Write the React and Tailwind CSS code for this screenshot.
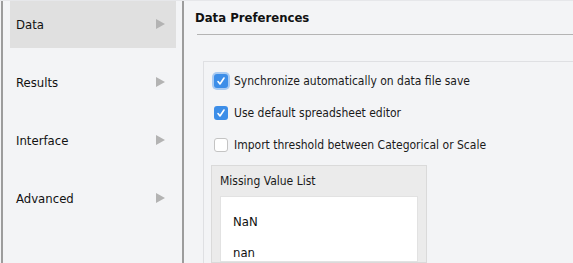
import React from "react";

const font = { fontFamily: '"DejaVu Sans Condensed", "DejaVu Sans", sans-serif' };

function Arrow() {
  return (
    <svg width="9" height="10" viewBox="0 0 9 10" className="shrink-0">
      <polygon points="0,0 9,5 0,10" fill="#b3b3b3" />
    </svg>
  );
}

function NavItem({ label, active }) {
  return (
    <div
      className={`h-[48px] flex items-center justify-between pl-[6px] pr-[11px] ${
        active ? "bg-[#e0e0e0]" : ""
      }`}
    >
      <span className="text-[13px] text-[#111] mt-[2px]">{label}</span>
      <Arrow />
    </div>
  );
}

function Check({ checked, focus }) {
  if (checked) {
    return (
      <div
        className={`w-[14px] h-[14px] rounded-[3px] bg-[#3d8ee8] flex items-center justify-center shrink-0 ${
          focus ? "ring-2 ring-[#a9cbf2]" : ""
        }`}
      >
        <svg width="10" height="10" viewBox="0 0 10 10">
          <path d="M2 5.5 L4 8 L8 2" stroke="white" strokeWidth="1.6" fill="none" strokeLinecap="round" strokeLinejoin="round" />
        </svg>
      </div>
    );
  }
  return <div className="w-[14px] h-[14px] rounded-[3px] bg-white border border-[#c4c4c4] shrink-0" />;
}

function Row({ label, checked, focus }) {
  return (
    <div className="h-[20px] flex items-center gap-[6px] pl-[3px]">
      <Check checked={checked} focus={focus} />
      <span className="text-[12px] text-[#1a1a1a]">{label}</span>
    </div>
  );
}

export default function App() {
  return (
    <div style={font} className="w-[573px] h-[263px] overflow-hidden bg-[#f3f4f6] flex border-t border-[#e6e7ea]">
      <div className="ml-[1px] w-[183px] shrink-0 border-l-2 border-r-2 border-[#9c9c9c] pl-[7px] pr-[6px] flex flex-col gap-[10px] -mt-px">
        <NavItem label="Data" active />
        <NavItem label="Results" />
        <NavItem label="Interface" />
        <NavItem label="Advanced" />
      </div>
      <div className="flex-1 flex flex-col min-w-0">
        <div className="h-[35px] flex items-center pl-[11px] -mt-px">
          <span className="text-[13px] font-bold text-[#111] mt-[2px]">Data Preferences</span>
        </div>
        <div className="ml-[13px] h-px bg-[#b4b4b4]" />
        <div className="mt-[26px] ml-[19px] flex-1 border-t border-l border-[#dfe0e3] pl-[7px] pt-[9px] flex flex-col">
          <div className="flex flex-col gap-[12px]">
            <Row label="Synchronize automatically on data file save" checked focus />
            <Row label="Use default spreadsheet editor" checked />
            <Row label="Import threshold between Categorical or Scale" />
          </div>
          <div className="mt-[10px] w-[216px] flex-1 bg-[#ebebeb] border border-[#dadada] px-[8px] flex flex-col">
            <div className="h-[30px] flex items-center text-[12px] text-[#1a1a1a]">Missing Value List</div>
            <div className="flex-1 bg-white border border-[#e2e2e2] pl-[12px] pt-[17px] flex flex-col gap-[15px]">
              <div className="text-[13px] text-[#111] h-[16px] leading-[16px]">NaN</div>
              <div className="text-[13px] text-[#111] h-[16px] leading-[16px]">nan</div>
            </div>
          </div>
        </div>
      </div>
    </div>
  );
}
